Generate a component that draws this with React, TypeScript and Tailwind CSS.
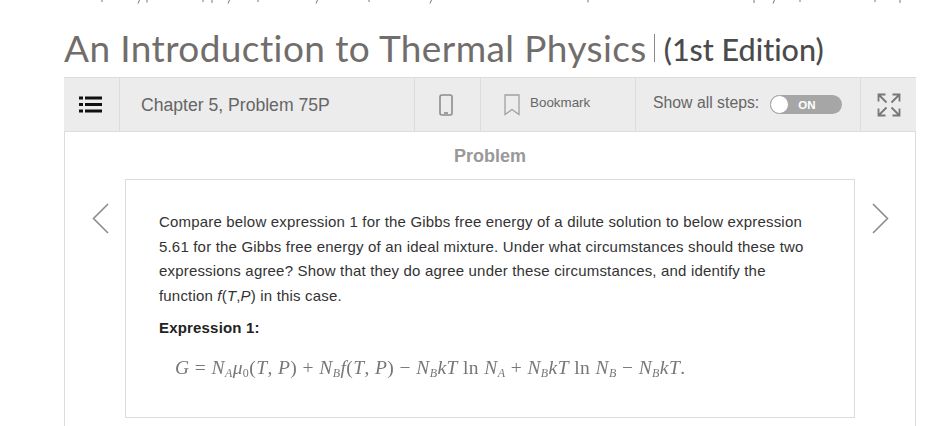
import React from 'react';

const Divider = () => <div className="w-px self-stretch bg-[#dcdcdc]" />;

// descenders of the line cut off by the top of the screenshot
const ClippedLine = () => (
    <svg width="936" height="5" viewBox="0 0 936 5" fill="none" stroke="#777777" strokeWidth="1" className="block">
        <path d="M102 0v2M138 3.5l1.5-3.5M147 0v2.5M203 0v2M212 0v3M228 3.5l1.5-3.5M258 0v2M316 3.5l1.5-3.5M369 0v2M430 3.5l1.5-3.5" />
        <path d="M588 0v2.5M754 0v3M773 3.5l1.5-3.5M800 0v2M875 0v2M900 0v3" />
    </svg>
);

const ExpandIcon = () => (
    <svg width="24" height="24" viewBox="0 0 24 24" fill="none" stroke="#777777" strokeWidth="1.8">
        <path d="M1.5 8.5V1.5H8.5M1.5 1.5L9.5 9.5" />
        <path d="M15.5 1.5H22.5V8.5M22.5 1.5L14.5 9.5" />
        <path d="M1.5 15.5V22.5H8.5M1.5 22.5L9.5 14.5" />
        <path d="M15.5 22.5H22.5V15.5M22.5 22.5L14.5 14.5" />
    </svg>
);

const ListIcon = () => (
    <svg width="23" height="18" viewBox="0 0 23 18" fill="#111111">
        <rect x="0" y="0.5" width="4" height="3" />
        <rect x="6" y="0.5" width="17" height="3" />
        <rect x="0" y="7" width="4" height="3" />
        <rect x="6" y="7" width="17" height="3" />
        <rect x="0" y="13.5" width="4" height="3" />
        <rect x="6" y="13.5" width="17" height="3" />
    </svg>
);

const PhoneIcon = () => (
    <svg width="14" height="22" viewBox="0 0 14 22" fill="none" stroke="#8c8c8c" strokeWidth="1.6">
        <rect x="1" y="1" width="12" height="20" rx="2" />
        <path d="M5 19h4" />
    </svg>
);

const BookmarkIcon = () => (
    <svg width="16" height="22" viewBox="0 0 16 22" fill="none" stroke="#a0a0a0" strokeWidth="1.3">
        <path d="M1 1H15V20.5L8 15.5L1 20.5Z" />
    </svg>
);

const Arrow = ({ flip }: { flip?: boolean }) => (
    <svg width="17" height="31" viewBox="0 0 17 31" fill="none" stroke="#8c8c8c" strokeWidth="1.6" className={flip ? 'rotate-180' : ''}>
        <path d="M16 1L1.5 15.5L16 30" />
    </svg>
);

const Sub = ({ children }: { children: React.ReactNode }) => (
    <sub className="text-[12px] italic">{children}</sub>
);

export default function App() {
    return (
        <div className="w-[936px] h-[426px] overflow-hidden bg-white font-['Liberation_Sans',Arial,sans-serif]">
            <ClippedLine />
            {/* Title */}
            <div className="flex items-center h-[72px] pl-16 pt-[13px]">
                <h1 className="font-['Lato',sans-serif] text-[37px] tracking-[0.4px] [font-variant-ligatures:none] font-normal text-[#716d6b] leading-none">
                    An Introduction to Thermal Physics
                </h1>
                <div className="w-px h-[28px] bg-[#8a8a8a] ml-[7px] mr-[9px]" />
                <span className="font-['Lato',sans-serif] text-[30.5px] [font-variant-ligatures:none] font-medium text-[#4b4b4b] leading-none mt-[3px]">
                    (1st Edition)
                </span>
            </div>

            <div className="w-[852px] ml-16 h-[349px] border-x border-[#dcdcdc]">
                {/* Toolbar */}
                <div className="flex items-stretch h-[55px] bg-[#ececec] border-y border-[#dcdcdc] -mx-px px-px">
                    <div className="flex w-[54px] items-center justify-center pr-[3px]">
                        <ListIcon />
                    </div>
                    <Divider />
                    <div className="flex w-[294px] items-center pl-[21px] pt-[2px] text-[17.6px] text-[#666666]">
                        Chapter 5, Problem 75P
                    </div>
                    <Divider />
                    <div className="flex w-[65px] items-center justify-center pr-[3px]">
                        <PhoneIcon />
                    </div>
                    <Divider />
                    <div className="flex w-[154px] items-center gap-[10px] pl-[23px] text-[13.4px] text-[#666666]">
                        <BookmarkIcon />
                        <span className="-mt-[2px]">Bookmark</span>
                    </div>
                    <Divider />
                    <div className="flex w-[224px] items-center gap-[11px] pl-[17px] text-[15.8px] text-[#666666]">
                        <span className="-mt-[3px]">Show all steps:</span>
                        <div className="relative h-[19px] w-[72px] rounded-full bg-[#a6a6a6]">
                            <div className="absolute left-0 top-0 h-[19px] w-[19px] rounded-full border border-[#a6a6a6] bg-white" />
                            <span className="absolute left-[28px] top-[2px] text-[11.5px] font-bold text-white">ON</span>
                        </div>
                    </div>
                    <Divider />
                    <div className="flex flex-1 items-center justify-center pl-[2px]">
                        <ExpandIcon />
                    </div>
                </div>

                {/* Problem */}
                <h2 className="h-[47px] pt-[14px] text-center text-[18px] leading-[21px] font-bold text-[#999999]">Problem</h2>
                <div className="flex items-start">
                    <div className="flex w-[60px] justify-center pt-[24px] pl-[10px]">
                        <Arrow />
                    </div>
                    <div className="h-[239px] w-[730px] border border-[#dcdcdc] pl-[33px] pr-[39px] pt-[30px] text-[15px] tracking-[0.18px] text-[#333333]">
                        <p className="leading-[24.7px]">
                            Compare below expression 1 for the Gibbs free energy of a dilute solution to below expression 5.61 for the Gibbs free energy of an ideal mixture. Under what circumstances should these two expressions agree? Show that they do agree under these circumstances, and identify the
                        </p>
                        <p className="leading-[24.7px]">
                            function <i>f</i>(<i>T</i>,<i>P</i>) in this case.
                        </p>
                        <p className="mt-[7px] font-bold leading-[24px] text-[#222222]">Expression 1:</p>
                        <p className="mt-[16px] ml-[16px] whitespace-nowrap font-['Liberation_Serif',serif] text-[19.5px] tracking-[0.41px] leading-[24px] text-[#777777] blur-[0.3px]">
                            <i>G</i> = <i>N</i><Sub>A</Sub><i>μ</i><sub className="text-[12px]">0</sub>(<i>T</i>, <i>P</i>) + <i>N</i><Sub>B</Sub><i>f</i>(<i>T</i>, <i>P</i>) − <i>N</i><Sub>B</Sub><i>kT</i> ln <i>N</i><Sub>A</Sub> + <i>N</i><Sub>B</Sub><i>kT</i> ln <i>N</i><Sub>B</Sub> − <i>N</i><Sub>B</Sub><i>kT</i>.
                        </p>
                    </div>
                    <div className="flex w-[60px] justify-center pt-[24px] pr-[9px]">
                        <Arrow flip />
                    </div>
                </div>
            </div>
        </div>
    );
}
